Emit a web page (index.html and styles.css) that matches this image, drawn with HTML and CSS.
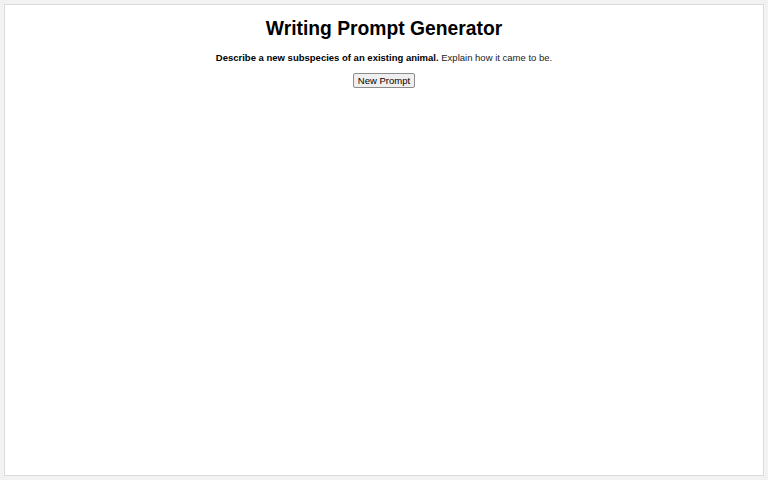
FILE: index.html
```html
<!DOCTYPE html>
<html lang="en">

<head>
    <meta charset="UTF-8">
    <meta name="viewport" content="width=device-width, initial-scale=1.0">
    <title>Writing Prompt Generator</title>
    <link rel="stylesheet" href="styles.css">
</head>

<body>
    <div class="page">
        <h1 class="page-title">Writing Prompt Generator</h1>
        <p class="prompt"><b>Describe a new subspecies of an existing animal.</b> Explain how it came to be.</p>
        <button class="prompt-button">New Prompt</button>
    </div>
</body>

</html>
```

FILE: styles.css
```css
* {
    margin: 0;
    padding: 0;
    box-sizing: border-box;
}

body {
    background: rgb(242, 242, 242);
    padding: 4px;
    font-family: "Liberation Sans", Arial, sans-serif;
    color: #000;
}

.page {
    height: 472px;
    background: #fff;
    border: 1px solid rgb(219, 219, 219);
    text-align: center;
    padding-top: 13px;
}

.page-title {
    font-size: 19.3px;
    line-height: 22px;
    font-weight: bold;
}

.prompt {
    font-size: 9.5px;
    line-height: 13px;
    margin-top: 11px;
    color: #222;
}

.prompt b {
    color: #000;
}

.prompt-button {
    margin-top: 9px;
    font-family: "Liberation Sans", Arial, sans-serif;
    font-size: 9.5px;
    line-height: 13px;
    padding: 0 4px;
    background: rgb(239, 239, 239);
    border: 1px solid rgb(140, 140, 140);
    border-radius: 2px;
    color: #000;
}
```
